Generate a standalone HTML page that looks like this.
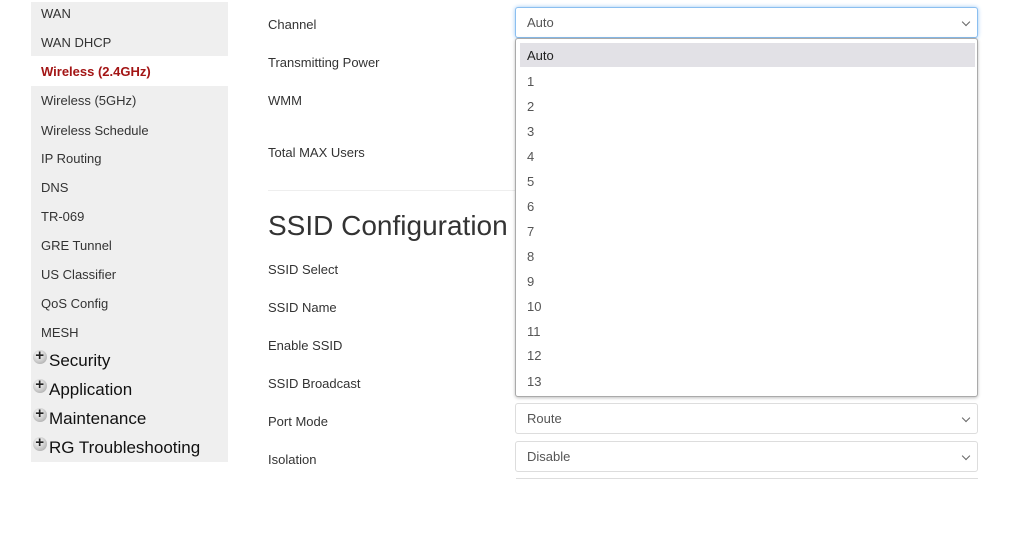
<!DOCTYPE html><html><head><style>
body{margin:0;width:1024px;height:537px;background:#fff;font-family:"Liberation Sans",sans-serif;position:relative;overflow:hidden;color:#333}
.sb{position:absolute;left:31px;top:2px;width:197px;height:460px;background:#efefef}
.it{position:absolute;left:41px;font-size:13px;color:#333;line-height:16px;margin-top:1px}
.sec{position:absolute;left:33px;font-size:17px;color:#111;line-height:20px;margin-top:1px}
.sec i{display:inline-block;width:14px;height:14px;border-radius:50%;background:radial-gradient(circle at 40% 35%,#fff,#bbb 70%,#888);vertical-align:top;margin-top:-1px;margin-right:2px;position:relative}
.sec i:before{content:"+";position:absolute;left:2px;top:-4px;font-size:15px;font-weight:bold;color:#222}
.lb{position:absolute;left:268px;font-size:13px;color:#333;line-height:16px;margin-top:1px}
.sel{position:absolute;left:515px;width:463px;height:31px;border:1px solid #ddd;border-radius:3px;box-sizing:border-box;font-size:13px;color:#555;padding-left:11px;line-height:29px;background:#fff}
.sel:after{content:"";position:absolute;right:8px;top:11px;width:5px;height:5px;border-right:1px solid #666;border-bottom:1px solid #666;transform:rotate(45deg)}
.dd{position:absolute;left:515px;top:38px;width:463px;height:359px;border:1px solid #aaa;border-radius:3px;box-sizing:border-box;background:#fff;box-shadow:0 1px 3px rgba(0,0,0,.25)}
.op{position:absolute;left:11px;font-size:13px;color:#555;line-height:16px;margin-top:1px}
</style></head><body>
<div class="sb"></div>
<div style="position:absolute;left:31px;top:56px;width:197px;height:30px;background:#fff"></div>
<div class="it" style="top:5px">WAN</div>
<div class="it" style="top:34px">WAN DHCP</div>
<div class="it" style="top:63px;color:#a31515;font-weight:bold">Wireless (2.4GHz)</div>
<div class="it" style="top:92px">Wireless (5GHz)</div>
<div class="it" style="top:122px">Wireless Schedule</div>
<div class="it" style="top:150px">IP Routing</div>
<div class="it" style="top:179px">DNS</div>
<div class="it" style="top:208px">TR-069</div>
<div class="it" style="top:237px">GRE Tunnel</div>
<div class="it" style="top:266px">US Classifier</div>
<div class="it" style="top:295px">QoS Config</div>
<div class="it" style="top:324px">MESH</div>
<div class="sec" style="top:350px"><i></i>Security</div>
<div class="sec" style="top:379px"><i></i>Application</div>
<div class="sec" style="top:408px"><i></i>Maintenance</div>
<div class="sec" style="top:437px"><i></i>RG Troubleshooting</div>
<div class="lb" style="top:16px">Channel</div>
<div class="lb" style="top:54px">Transmitting Power</div>
<div class="lb" style="top:92px">WMM</div>
<div class="lb" style="top:144px">Total MAX Users</div>
<div style="position:absolute;left:268px;top:190px;width:710px;height:1px;background:#eee"></div>
<div style="position:absolute;left:268px;top:209px;font-size:28px;color:#333;line-height:34px">SSID Configuration</div>
<div class="lb" style="top:261px">SSID Select</div>
<div class="lb" style="top:299px">SSID Name</div>
<div class="lb" style="top:337px">Enable SSID</div>
<div class="lb" style="top:375px">SSID Broadcast</div>
<div class="lb" style="top:413px">Port Mode</div>
<div class="lb" style="top:451px">Isolation</div>
<div class="sel" style="top:7px;border-color:#8bbff0;box-shadow:0 0 4px #9cc8f5">Auto</div>
<div class="sel" style="top:403px">Route</div>
<div class="sel" style="top:441px">Disable</div>
<div style="position:absolute;left:516px;top:478px;width:462px;height:1px;background:#ddd"></div>
<div class="dd">
<div style="position:absolute;left:4px;top:4px;width:455px;height:24px;background:#e2e1e6"></div>
<div class="op" style="top:8px;color:#222">Auto</div>
<div class="op" style="top:34px">1</div><div class="op" style="top:59px">2</div><div class="op" style="top:84px">3</div><div class="op" style="top:109px">4</div><div class="op" style="top:134px">5</div><div class="op" style="top:159px">6</div><div class="op" style="top:184px">7</div><div class="op" style="top:209px">8</div><div class="op" style="top:234px">9</div><div class="op" style="top:259px">10</div><div class="op" style="top:284px">11</div><div class="op" style="top:308px">12</div><div class="op" style="top:334px">13</div>
</div>
</body></html>
